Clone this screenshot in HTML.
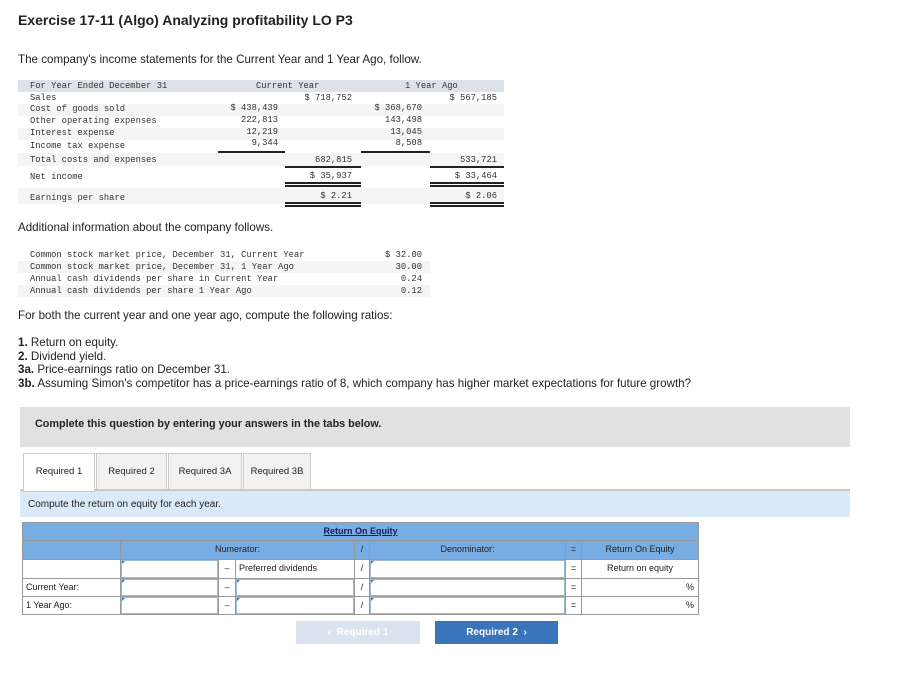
<!DOCTYPE html>
<html><head><meta charset="utf-8"><style>
*{margin:0;padding:0;box-sizing:border-box}
body{width:918px;height:684px;background:#fff;position:relative;font-family:"Liberation Sans",sans-serif;color:#222;overflow:hidden}
.a{position:absolute;white-space:nowrap}
.m{font-family:"Liberation Mono",monospace;font-size:8.8px;color:#333;line-height:12px}
.r{text-align:right}
.t{font-size:11.6px}
.bar{position:absolute;background:#222;height:2px}
.dbl{position:absolute;border-top:2px solid #222;border-bottom:2px solid #222;height:5px}
.tab{position:absolute;top:453px;height:37px;background:#f2f2f2;border:1px solid #ccc;font-size:9.5px;line-height:35px;text-align:center}
.cell{position:absolute;border:1px solid #999;background:#fff;font-size:9px;line-height:17px}
.h{background:#78ade4}
.in{position:absolute;border:1px solid #9cb8dd;background:#fff}
.in:before{content:"";position:absolute;left:0;top:0;border-left:3px solid #3a74bb;border-bottom:3px solid transparent}
</style></head><body>
<div class="a" style="left:18px;top:12px;font-size:14px;font-weight:bold;color:#222">Exercise 17-11 (Algo) Analyzing profitability LO P3</div>
<div class="a t" style="left:18px;top:53px">The company's income statements for the Current Year and 1 Year Ago, follow.</div>

<div class="a" style="left:18px;top:80px;width:486px;height:12px;background:#dde1e8"></div>
<div class="a" style="left:18px;top:104px;width:486px;height:12px;background:#f5f5f5"></div>
<div class="a" style="left:18px;top:128px;width:486px;height:12px;background:#f5f5f5"></div>
<div class="a" style="left:18px;top:153px;width:486px;height:13px;background:#f5f5f5"></div>
<div class="a" style="left:18px;top:188px;width:486px;height:16px;background:#f5f5f5"></div>
<div class="a m" style="left:30px;top:80px">For Year Ended December 31</div>
<div class="a m" style="left:256px;top:80px">Current Year</div>
<div class="a m" style="left:405px;top:80px">1 Year Ago</div>
<div class="a m" style="left:30px;top:92px">Sales</div>
<div class="a m" style="left:30px;top:103px">Cost of goods sold</div>
<div class="a m" style="left:30px;top:115px">Other operating expenses</div>
<div class="a m" style="left:30px;top:127px">Interest expense</div>
<div class="a m" style="left:30px;top:140px">Income tax expense</div>
<div class="a m" style="left:30px;top:154px">Total costs and expenses</div>
<div class="a m" style="left:30px;top:171px">Net income</div>
<div class="a m" style="left:30px;top:192px">Earnings per share</div>
<div class="a m r" style="right:566px;top:92px">$ 718,752</div>
<div class="a m r" style="right:421px;top:92px">$ 567,185</div>
<div class="a m r" style="right:640px;top:103px;line-height:11.8px">$ 438,439<br>222,813<br>12,219<br>9,344</div>
<div class="a m r" style="right:496px;top:103px;line-height:11.8px">$ 368,670<br>143,498<br>13,045<br>8,508</div>
<div class="bar" style="left:218px;top:151px;width:67px"></div>
<div class="bar" style="left:361px;top:151px;width:69px"></div>
<div class="a m r" style="right:566px;top:154px">682,815</div>
<div class="a m r" style="right:421px;top:154px">533,721</div>
<div class="bar" style="left:285px;top:166px;width:76px"></div>
<div class="bar" style="left:430px;top:166px;width:74px"></div>
<div class="a m r" style="right:566px;top:170px">$ 35,937</div>
<div class="a m r" style="right:421px;top:170px">$ 33,464</div>
<div class="dbl" style="left:285px;top:182px;width:76px"></div>
<div class="dbl" style="left:430px;top:182px;width:74px"></div>
<div class="a m r" style="right:566px;top:190px">$ 2.21</div>
<div class="a m r" style="right:421px;top:190px">$ 2.06</div>
<div class="dbl" style="left:285px;top:202px;width:76px"></div>
<div class="dbl" style="left:430px;top:202px;width:74px"></div>

<div class="a t" style="left:18px;top:221px">Additional information about the company follows.</div>
<div class="a" style="left:18px;top:261px;width:412px;height:12px;background:#f5f5f5"></div>
<div class="a" style="left:18px;top:285px;width:412px;height:12px;background:#f5f5f5"></div>
<div class="a m" style="left:30px;top:249px">Common stock market price, December 31, Current Year<br>Common stock market price, December 31, 1 Year Ago<br>Annual cash dividends per share in Current Year<br>Annual cash dividends per share 1 Year Ago</div>
<div class="a m r" style="right:496px;top:249px">$ 32.00<br>30.00<br>0.24<br>0.12</div>

<div class="a t" style="left:18px;top:309px">For both the current year and one year ago, compute the following ratios:</div>
<div class="a t" style="left:18px;top:336px;line-height:13.6px"><b>1.</b> Return on equity.<br><b>2.</b> Dividend yield.<br><b>3a.</b> Price-earnings ratio on December 31.<br><b>3b.</b> Assuming Simon's competitor has a price-earnings ratio of 8, which company has higher market expectations for future growth?</div>

<div class="a" style="left:20px;top:407px;width:830px;height:40px;background:#e1e1e1"></div>
<div class="a" style="left:35px;top:418px;font-size:10.8px;font-weight:bold">Complete this question by entering your answers in the tabs below.</div>

<div class="a" style="left:20px;top:489px;width:830px;height:28px;background:#dbeaf8;border-top:2px solid #c8c8c8"></div>
<div class="tab" style="left:23px;width:72px;background:#fff;height:39px">Required 1</div>
<div class="tab" style="left:96px;width:71px">Required 2</div>
<div class="tab" style="left:168px;width:74px">Required 3A</div>
<div class="tab" style="left:243px;width:68px">Required 3B</div>
<div class="a" style="left:28px;top:499px;font-size:10px">Compute the return on equity for each year.</div>

<div class="a" style="left:22px;top:522px;width:677px;height:93px;background:#999"></div>
<div class="cell h" style="left:22px;top:522px;width:677px;height:19px;text-align:center;font-weight:bold;color:#1a1a55"><u>Return On Equity</u></div>
<div class="cell h" style="left:22px;top:540px;width:99px;height:20px"></div>
<div class="cell h" style="left:120px;top:540px;width:235px;height:20px;text-align:center">Numerator:</div>
<div class="cell h" style="left:354px;top:540px;width:16px;height:20px;text-align:center">/</div>
<div class="cell h" style="left:369px;top:540px;width:197px;height:20px;text-align:center">Denominator:</div>
<div class="cell h" style="left:565px;top:540px;width:17px;height:20px;text-align:center">=</div>
<div class="cell h" style="left:581px;top:540px;width:118px;height:20px;text-align:center">Return On Equity</div>

<div class="cell" style="left:22px;top:559px;width:99px;height:20px"></div>
<div class="cell" style="left:120px;top:559px;width:99px;height:20px"></div>
<div class="cell" style="left:218px;top:559px;width:18px;height:20px;text-align:center">–</div>
<div class="cell" style="left:235px;top:559px;width:120px;height:20px;padding-left:3px">Preferred dividends</div>
<div class="cell" style="left:354px;top:559px;width:16px;height:20px;text-align:center">/</div>
<div class="cell" style="left:369px;top:559px;width:197px;height:20px"></div>
<div class="cell" style="left:565px;top:559px;width:17px;height:20px;text-align:center">=</div>
<div class="cell" style="left:581px;top:559px;width:118px;height:20px;text-align:center">Return on equity</div>

<div class="cell" style="left:22px;top:578px;width:99px;height:19px;padding-left:3px">Current Year:</div>
<div class="cell" style="left:120px;top:578px;width:99px;height:19px"></div>
<div class="cell" style="left:218px;top:578px;width:18px;height:19px;text-align:center">–</div>
<div class="cell" style="left:235px;top:578px;width:120px;height:19px"></div>
<div class="cell" style="left:354px;top:578px;width:16px;height:19px;text-align:center">/</div>
<div class="cell" style="left:369px;top:578px;width:197px;height:19px"></div>
<div class="cell" style="left:565px;top:578px;width:17px;height:19px;text-align:center">=</div>
<div class="cell" style="left:581px;top:578px;width:118px;height:19px;text-align:right;padding-right:4px">%</div>

<div class="cell" style="left:22px;top:596px;width:99px;height:19px;padding-left:3px">1 Year Ago:</div>
<div class="cell" style="left:120px;top:596px;width:99px;height:19px"></div>
<div class="cell" style="left:218px;top:596px;width:18px;height:19px;text-align:center">–</div>
<div class="cell" style="left:235px;top:596px;width:120px;height:19px"></div>
<div class="cell" style="left:354px;top:596px;width:16px;height:19px;text-align:center">/</div>
<div class="cell" style="left:369px;top:596px;width:197px;height:19px"></div>
<div class="cell" style="left:565px;top:596px;width:17px;height:19px;text-align:center">=</div>
<div class="cell" style="left:581px;top:596px;width:118px;height:19px;text-align:right;padding-right:4px">%</div>

<div class="in" style="left:121px;top:560px;width:97px;height:18px"></div>
<div class="in" style="left:370px;top:560px;width:195px;height:18px"></div>
<div class="in" style="left:121px;top:579px;width:97px;height:17px"></div>
<div class="in" style="left:236px;top:579px;width:118px;height:17px"></div>
<div class="in" style="left:370px;top:579px;width:195px;height:17px"></div>
<div class="in" style="left:121px;top:597px;width:97px;height:17px"></div>
<div class="in" style="left:236px;top:597px;width:118px;height:17px"></div>
<div class="in" style="left:370px;top:597px;width:195px;height:17px"></div>

<div class="a" style="left:296px;top:621px;width:124px;height:23px;background:#dae4f0;color:#fff;font-size:10px;font-weight:bold;text-align:center;line-height:23px">&lsaquo;&nbsp; Required 1</div>
<div class="a" style="left:435px;top:621px;width:123px;height:23px;background:#3a74bb;color:#fff;font-size:10px;font-weight:bold;text-align:center;line-height:23px">Required 2 &nbsp;&rsaquo;</div>
</body></html>
